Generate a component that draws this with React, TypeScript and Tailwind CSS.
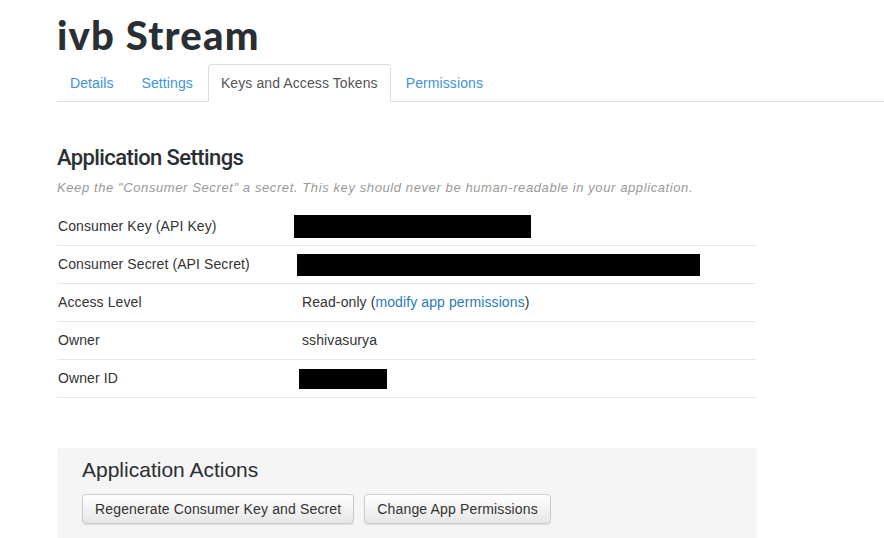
const rows: { label: string; value: React.ReactNode }[] = [
  {
    label: "Consumer Key (API Key)",
    value: <div className="ml-[-3px] h-[23px] w-[237px] bg-black" />,
  },
  {
    label: "Consumer Secret (API Secret)",
    value: <div className="h-[22px] w-[403px] bg-black" />,
  },
  {
    label: "Access Level",
    value: (
      <span className="pl-[5px]">
        Read-only (<a className="text-[#2b7bb9]">modify app permissions</a>)
      </span>
    ),
  },
  { label: "Owner", value: <span className="pl-[5px]">sshivasurya</span> },
  {
    label: "Owner ID",
    value: <div className="ml-[2px] h-[20px] w-[88px] bg-black" />,
  },
];

const tabs = ["Details", "Settings", "Keys and Access Tokens", "Permissions"];

export default function App() {
  return (
    <div className="h-[538px] w-[884px] overflow-hidden bg-white pl-[57px] font-['Liberation_Sans',Arial,sans-serif] text-[14px] text-[#333]">
      <h1 className="pt-[11px] font-['Lato',sans-serif] text-[40px] leading-[48px] font-black tracking-[1.2px] text-[#292f33]">
        ivb Stream
      </h1>

      <ul className="mt-[5px] flex border-b border-[#ddd]">
        {tabs.map((t, i) => (
          <li key={t} className="-mb-px mr-[2px]">
            <a
              className={
                i === 2
                  ? "block rounded-t-[4px] border border-[#ddd] border-b-white bg-white px-[12px] py-[8px] leading-[20px] tracking-[0.1px] text-[#555]"
                  : "block border border-transparent px-[12px] py-[8px] leading-[20px] tracking-[0.1px] text-[#3b94d9]"
              }
            >
              {t}
            </a>
          </li>
        ))}
      </ul>

      <h2 className="mt-[43px] font-['Roboto',sans-serif] text-[22px] leading-[26px] font-medium tracking-[-0.6px] text-[#292f33]">
        Application Settings
      </h2>
      <p className="mt-[8px] text-[13px] italic leading-[18px] tracking-[0.6px] text-[#999]">
        Keep the "Consumer Secret" a secret. This key should never be human-readable in your application.
      </p>

      <div className="mt-[11px] w-[699px] tracking-[0.1px]">
        {rows.map((r) => (
          <div
            key={r.label}
            className="flex h-[38px] items-center border-b border-[#e6e6e6]"
          >
            <div className="w-[240px] pl-[1px]">{r.label}</div>
            <div className="flex items-center">{r.value}</div>
          </div>
        ))}
      </div>

      <div className="mt-[50px] w-[700px] rounded-[4px] bg-[#f5f5f5] px-[25px] pb-[30px] pt-[10px]">
        <h3 className="text-[21px] leading-[24px] text-[#292f33]">
          Application Actions
        </h3>
        <div className="mt-[12px] flex gap-[10px]">
          {["Regenerate Consumer Key and Secret", "Change App Permissions"].map(
            (b) => (
              <button
                key={b}
                className="h-[30px] rounded-[4px] border border-[#ccc] bg-gradient-to-b from-white to-[#e6e6e6] px-[12px] text-[14px] tracking-[0.15px] text-[#333] shadow-[0_1px_1px_rgba(0,0,0,0.1)]"
              >
                {b}
              </button>
            )
          )}
        </div>
      </div>
    </div>
  );
}
